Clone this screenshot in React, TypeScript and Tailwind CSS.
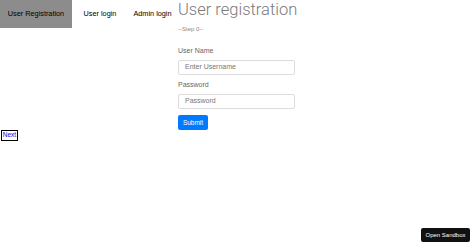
import React from "react";

export default function App() {
  return (
    <div className="relative w-[474px] h-[248px] bg-white" style={{ fontFamily: '"Liberation Sans", Arial, sans-serif' }}>
      <div className="flex items-start">
        <div className="w-[178px] flex flex-col">
          <div className="flex items-start">
            <div className="h-[28px] w-[72px] bg-[#8c8c8c] flex items-center justify-center text-[7.3px] text-black">User Registration</div>
            <div className="h-[28px] w-[54px] flex items-center justify-center text-[7.3px] text-black ml-[1px]">User login</div>
            <div className="h-[28px] w-[51px] flex items-center justify-center text-[7.3px] text-black">Admin login</div>
          </div>
          <div className="mt-[102px] flex">
            <button className="ml-[1px] h-[11px] w-[17px] border border-black text-[6.5px] leading-none text-[#0000ee] bg-white flex items-center justify-center">Next</button>
          </div>
        </div>
        <div className="flex flex-col w-[130px]">
          <div className="text-[16.5px] leading-[20px] whitespace-nowrap text-[#7a7a7a] font-light" style={{ fontFamily: 'Roboto, "Liberation Sans", sans-serif' }}>User registration</div>
          <div className="text-[6px] leading-[8px] text-[#888] mt-[5px]">--Step 0--</div>
          <div className="text-[7px] leading-[9px] text-[#666] mt-[13px]">User Name</div>
          <div className="mt-[5px] h-[15px] w-[117px] border border-[#dcdcdc] rounded-[2px] flex items-center px-[6px] text-[7px] text-[#777]">Enter Username</div>
          <div className="text-[7px] leading-[9px] text-[#666] mt-[5px]">Password</div>
          <div className="mt-[5px] h-[15px] w-[117px] border border-[#dcdcdc] rounded-[2px] flex items-center px-[6px] text-[7px] text-[#777]">Password</div>
          <div className="mt-[6px] h-[15px] w-[30px] bg-[#007bff] rounded-[2px] flex items-center justify-center text-[6.5px] text-white">Submit</div>
        </div>
      </div>
      <div className="absolute left-[421px] top-[228px] h-[14px] w-[49px] bg-[#111] rounded-[2px] flex items-center justify-center text-[6px] text-white">Open Sandbox</div>
    </div>
  );
}
